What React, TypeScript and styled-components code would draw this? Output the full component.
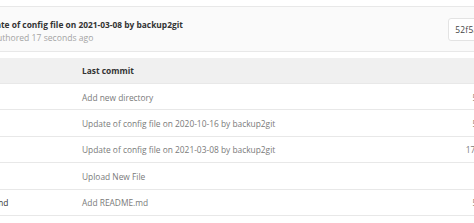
import React from "react";
import styled, { createGlobalStyle } from "styled-components";

const GlobalStyle = createGlobalStyle`
  html, body {
    margin: 0;
    padding: 0;
    background: #ffffff;
  }
  body {
    font-family: "Open Sans", "Noto Sans", sans-serif;
    color: #2e2e2e;
  }
`;

const Viewport = styled.div`
  width: 474px;
  height: 223px;
  overflow: hidden;
`;

const Page = styled.div`
  margin-left: -200px;
  width: 760px;
  padding-top: 6px;
`;

const CommitBox = styled.div`
  display: flex;
  align-items: center;
  justify-content: space-between;
  box-sizing: border-box;
  height: 46px;
  padding: 4px 0 0 179px;
  background: #fafafa;
  border-top: 1px solid #e8e8e8;
  border-bottom: 1px solid #e8e8e8;
`;

const CommitInfo = styled.div`
  display: flex;
  flex-direction: column;
  gap: 2px;
`;

const CommitTitle = styled.div`
  font-size: 8.4px;
  font-weight: 700;
  color: #333333;
`;

const CommitMeta = styled.div`
  margin-left: -33px;
  font-size: 8.6px;
  color: #a4a4a4;
`;

const ShaBox = styled.div`
  display: flex;
  align-items: center;
  height: 21px;
  padding: 0 6px;
  margin-right: 60px;
  margin-top: -4px;
  background: #ffffff;
  border: 1px solid #e3e3e3;
  border-radius: 3px;
  font-size: 8.4px;
  color: #444444;
  letter-spacing: 0.3px;
`;

const Table = styled.div`
  margin-top: 6px;
  display: flex;
  flex-direction: column;
`;

const Row = styled.div<{ $header?: boolean }>`
  display: grid;
  grid-template-columns: 282px 1fr 140px;
  align-items: center;
  box-sizing: border-box;
  height: ${(p) => (p.$header ? 26 : 26.4)}px;
  padding-top: ${(p) => (p.$header ? 0 : 1)}px;
  background: ${(p) => (p.$header ? "#f0f0f0" : "#ffffff")};
  border-bottom: 1px solid #e8e8e8;
  font-size: 8.4px;
`;

const NameCell = styled.div`
  padding-left: 160px;
  color: #333333;
`;

const HeadCell = styled.div`
  font-weight: 700;
  color: #333333;
`;

const CommitCell = styled.div`
  color: #7a7a7a;
`;

const DateCell = styled.div`
  text-align: right;
  padding-right: 34px;
  color: #7a7a7a;
`;

const rows = [
  { name: "config", message: "Add new directory", date: "5 months ago" },
  {
    name: "scripts",
    message: "Update of config file on 2020-10-16 by backup2git",
    date: "5 months ago",
  },
  {
    name: "fw01.cfg",
    message: "Update of config file on 2021-03-08 by backup2git",
    date: "17 seconds ago",
  },
  { name: "notes", message: "Upload New File", date: "1 day ago" },
  { name: "README.md", message: "Add README.md", date: "5 months ago" },
];

export default function App() {
  return (
    <>
      <GlobalStyle />
      <Viewport>
        <Page>
          <CommitBox>
            <CommitInfo>
              <CommitTitle>
                Update of config file on 2021-03-08 by backup2git
              </CommitTitle>
              <CommitMeta>backup2git authored 17 seconds ago</CommitMeta>
            </CommitInfo>
            <ShaBox>52f5a7c1</ShaBox>
          </CommitBox>
          <Table>
            <Row $header>
              <NameCell>
                <HeadCell>Name</HeadCell>
              </NameCell>
              <HeadCell>Last commit</HeadCell>
              <DateCell>
                <HeadCell>Last update</HeadCell>
              </DateCell>
            </Row>
            {rows.map((r) => (
              <Row key={r.name}>
                <NameCell>{r.name}</NameCell>
                <CommitCell>{r.message}</CommitCell>
                <DateCell>{r.date}</DateCell>
              </Row>
            ))}
          </Table>
        </Page>
      </Viewport>
    </>
  );
}
